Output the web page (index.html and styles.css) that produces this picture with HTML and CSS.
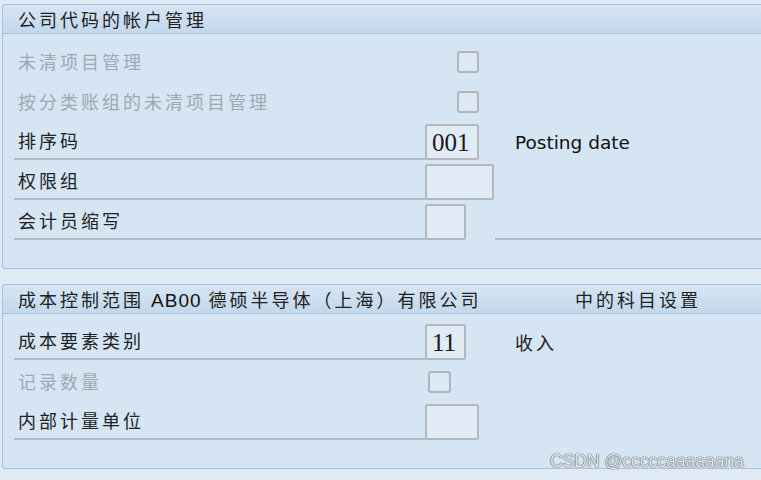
FILE: index.html
```html
<!DOCTYPE html>
<html lang="zh">
<head>
<meta charset="utf-8">
<link rel="stylesheet" href="styles.css">
</head>
<body>
<div class="page">
  <section class="panel">
    <div class="panel-head">公司代码的帐户管理</div>
    <div class="panel-body">
      <div class="row">
        <div class="label disabled">未清项目管理</div>
        <div class="field"><span class="check at-right"></span></div>
      </div>
      <div class="row">
        <div class="label disabled">按分类账组的未清项目管理</div>
        <div class="field"><span class="check at-right"></span></div>
      </div>
      <div class="row">
        <div class="label lined">排序码</div>
        <div class="field"><span class="input w54 serif">001</span><span class="desc latin">Posting date</span></div>
      </div>
      <div class="row">
        <div class="label lined">权限组</div>
        <div class="field"><span class="input w69"></span></div>
      </div>
      <div class="row">
        <div class="label lined">会计员缩写</div>
        <div class="field"><span class="input w41"></span><span class="desc-line"></span></div>
      </div>
    </div>
  </section>

  <section class="panel">
    <div class="panel-head"><span class="head-main">成本控制范围 <span class="latin-b">AB00</span> 德硕半导体（上海）有限公司</span><span>中的科目设置</span></div>
    <div class="panel-body">
      <div class="row">
        <div class="label lined">成本要素类别</div>
        <div class="field"><span class="input w41 serif">11</span><span class="desc desc-cn">收入</span></div>
      </div>
      <div class="row">
        <div class="label disabled">记录数量</div>
        <div class="field"><span class="check at-left"></span></div>
      </div>
      <div class="row">
        <div class="label lined">内部计量单位</div>
        <div class="field"><span class="input w54"></span></div>
      </div>
    </div>
  </section>
  <div class="watermark">CSDN @cccccaaaaaana</div>
</div>
</body>
</html>
```

FILE: styles.css
```css
html, body {
  margin: 0;
  padding: 0;
  background: #dfeaf5;
  width: 761px;
  height: 480px;
  overflow: hidden;
}

.page {
  position: relative;
  padding: 4px 0 0 2px;
  font-family: "Noto Sans CJK SC", "Noto Sans", sans-serif;
  font-size: 18px;
  color: #222;
}

.panel {
  background: #d5e5f4;
  border: 1px solid #a9c1dc;
  border-right: none;
  border-radius: 3px 0 0 3px;
  margin-bottom: 15px;
}

.panel-head {
  height: 28px;
  line-height: 28px;
  padding-left: 15px;
  letter-spacing: 3px;
  background: linear-gradient(#d6e5f4, #c3d8ec);
  border-bottom: 1px solid #a9c1dc;
  border-radius: 3px 0 0 0;
  display: flex;
  white-space: nowrap;
}

.head-main {
  width: 557px;
}

.latin-b {
  font-family: "Liberation Sans", sans-serif;
  font-size: 19px;
  letter-spacing: 1px;
  color: #111;
}

.panel-body {
  padding: 6px 0 28px 11px;
}

.row {
  display: flex;
  height: 40px;
}

.label {
  box-sizing: border-box;
  width: 411px;
  padding: 3px 0 0 4px;
  line-height: 37px;
  letter-spacing: 3px;
  white-space: nowrap;
}

.label.lined {
  border-bottom: 2px solid #b4bcc6;
  line-height: 35px;
}

.label.disabled {
  color: #a0a8b1;
}

.field {
  flex: 1;
  display: flex;
  align-items: flex-end;
  position: relative;
}

.check {
  box-sizing: border-box;
  width: 22px;
  height: 22px;
  border: 2px solid #b0b4b8;
  border-radius: 3px;
  background: #dde9f4;
  align-self: flex-start;
  margin-top: 11px;
}

.check.at-right {
  margin-left: 32px;
}

.check.at-left {
  margin-left: 3px;
  width: 23px;
}

.input {
  box-sizing: border-box;
  height: 36px;
  border: 2px solid #b4b8bc;
  border-radius: 2px;
  background: #e0ebf6;
  display: flex;
  align-items: center;
  padding-left: 5px;
}

.serif {
  font-family: "Liberation Serif", serif;
  font-size: 25px;
  color: #1a1a1a;
  padding-top: 2px;
}

.w41 { width: 41px; }
.w54 { width: 54px; }
.w69 { width: 69px; }

.desc {
  align-self: center;
  margin-left: 36px;
  margin-top: 4px;
}

.desc.latin {
  font-family: "DejaVu Sans", sans-serif;
  font-size: 18.5px;
  color: #111;
}

.desc.desc-cn {
  margin-left: 49px;
  letter-spacing: 3px;
}

.desc-line {
  flex: 1;
  margin-left: 29px;
  border-bottom: 2px solid #b4bcc6;
}

.watermark {
  position: absolute;
  left: 550px;
  top: 451px;
  font-family: "Liberation Sans", sans-serif;
  font-size: 17.5px;
  color: #e4e8ec;
  text-shadow: 0 0 1px #5e6670, 0 0 1px #5e6670, 0 0 1px #5e6670;
  letter-spacing: 0;
}
```
